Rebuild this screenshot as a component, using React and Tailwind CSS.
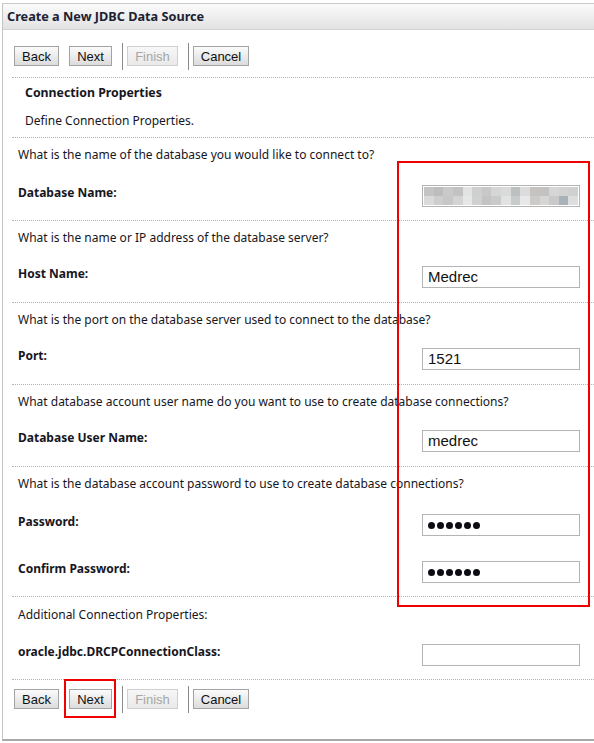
const blurCells = [
  ["bg-[#c4c4c4]", "bg-[#bdbdbd]", "bg-[#c9c9c9]", "bg-[#c2c2c2]", "bg-[#e2e4e4]", "bg-[#cfcfcf]", "bg-[#c8c8c8]", "bg-[#d6d6d6]", "bg-[#d9dada]", "bg-[#bcc0c0]", "bg-[#dcdcdc]", "bg-[#c6c2c0]", "bg-[#c2c2c2]", "bg-[#d6d6d6]", "bg-[#d2d2d2]", "bg-[#cfd0d0]"],
  ["bg-[#dadada]", "bg-[#cdcdcd]", "bg-[#c7c7c7]", "bg-[#d4d4d4]", "bg-[#e6e7e7]", "bg-[#d0d0d0]", "bg-[#c4c4c4]", "bg-[#cacaca]", "bg-[#e1e2e2]", "bg-[#c7cbcb]", "bg-[#e8e8e8]", "bg-[#cdcbc9]", "bg-[#d8d6d2]", "bg-[#c9c9c9]", "bg-[#a9b2b8]", "bg-[#dedede]"],
];

function ToolButton({ label, disabled, width }) {
  return (
    <div
      className={
        "h-[20px] flex items-center justify-center border font-['Liberation_Sans',Arial,sans-serif] text-[13px] leading-none " +
        (disabled
          ? "border-[#cfcfcf] bg-gradient-to-b from-[#f7f7f7] to-[#e9e9e9] text-[#a6a6a6]"
          : "border-[#a3a3a3] bg-gradient-to-b from-[#fbfbfb] to-[#dcdcdc] text-[#111]") +
        " " + width
      }
    >
      {label}
    </div>
  );
}

function Toolbar() {
  return (
    <div className="flex items-center h-[28px] pl-[2px]">
      <ToolButton label="Back" width="w-[45px]" />
      <div className="ml-[10px]">
        <ToolButton label="Next" width="w-[43px]" />
      </div>
      <div className="ml-[10px] mr-[4px] w-px h-[27px] bg-[#8a8a8a]" />
      <ToolButton label="Finish" disabled width="w-[51px]" />
      <div className="ml-[10px] mr-[4px] w-px h-[27px] bg-[#8a8a8a]" />
      <ToolButton label="Cancel" width="w-[56px]" />
    </div>
  );
}

function TextBox({ children, className = "" }) {
  return (
    <div className={"w-[158px] h-[22px] mb-[1px] self-end border border-[#b4b4b4] bg-white flex items-center pl-[5px] font-['Liberation_Sans',Arial,sans-serif] text-[15px] text-[#111] " + className}>
      {children}
    </div>
  );
}

function Dots() {
  return (
    <div className="flex gap-[2px]">
      {[0, 1, 2, 3, 4, 5].map(i => (
        <span key={i} className="w-[7px] h-[7px] rounded-full bg-[#0c0c14]" />
      ))}
    </div>
  );
}

function FieldRow({ label, children, className = "" }) {
  return (
    <div className={"flex h-[24px] " + className}>
      <div className="w-[404px] pt-[1px] leading-[16px] font-bold">{label}</div>
      {children}
    </div>
  );
}

function Section({ question, children, className = "" }) {
  return (
    <div className={"border-t border-dotted border-[#b2b2b2] pl-[6px] " + className}>
      <div className="leading-[18px]">{question}</div>
      {children}
    </div>
  );
}

export default function App() {
  return (
    <div className="relative w-[594px] h-[743px] bg-white overflow-hidden pt-[3px] pl-[2px] font-['Noto_Sans',Tahoma,sans-serif] text-[12px] text-[#161622]">
      <div className="w-[620px] h-[738px] border-t border-l border-b-2 border-t-[#c9c9c9] border-l-[#c3c3c3] border-b-[#a8a8a8]">
        <div className="h-[26px] border-b border-[#d4d4d4] bg-gradient-to-b from-[#fbfbfb] to-[#e2e2e2] flex items-center pl-[4px] pt-[1px] font-bold text-[12.7px] text-[#1c2233]">
          Create a New JDBC Data Source
        </div>

        <div className="pl-[9px]">
          <div className="pt-[12px]">
            <Toolbar />
          </div>

          <div className="mt-[7px] border-t border-dotted border-[#b2b2b2] pl-[13px] pt-[7px] pb-[8px]">
            <div className="leading-[16px] font-bold text-[12.3px]">Connection Properties</div>
            <div className="leading-[16px] mt-[12px]">Define Connection Properties.</div>
          </div>

          <Section question="What is the name of the database you would like to connect to?" className="pt-[8px] pb-[12px]">
            <FieldRow label="Database Name:" className="mt-[20px]">
              <div className="w-[158px] h-[22px] mb-[1px] self-end border border-[#b4b4b4] p-[1px] flex flex-col">
                {blurCells.map((row, r) => (
                  <div key={r} className="flex flex-1">
                    {row.map((c, i) => (
                      <div key={i} className={"flex-1 " + c} />
                    ))}
                  </div>
                ))}
              </div>
            </FieldRow>
          </Section>

          <Section question="What is the name or IP address of the database server?" className="pt-[8px] pb-[13px]">
            <FieldRow label="Host Name:" className="mt-[18px]">
              <TextBox>Medrec</TextBox>
            </FieldRow>
          </Section>

          <Section question="What is the port on the database server used to connect to the database?" className="pt-[8px] pb-[13px]">
            <FieldRow label="Port:" className="mt-[18px]">
              <TextBox>1521</TextBox>
            </FieldRow>
          </Section>

          <Section question="What database account user name do you want to use to create database connections?" className="pt-[8px] pb-[13px]">
            <FieldRow label="Database User Name:" className="mt-[18px]">
              <TextBox>medrec</TextBox>
            </FieldRow>
          </Section>

          <Section question="What is the database account password to use to create database connections?" className="pt-[8px] pb-[12px]">
            <FieldRow label="Password:" className="mt-[20px]">
              <TextBox><Dots /></TextBox>
            </FieldRow>
            <FieldRow label="Confirm Password:" className="mt-[23px]">
              <TextBox><Dots /></TextBox>
            </FieldRow>
          </Section>

          <Section question="Additional Connection Properties:" className="pt-[9px] pb-[12px]">
            <FieldRow label="oracle.jdbc.DRCPConnectionClass:" className="mt-[19px]">
              <TextBox />
            </FieldRow>
          </Section>

          <div className="border-t border-dotted border-[#b2b2b2] pt-[5px]">
            <Toolbar />
          </div>
        </div>
      </div>

      <div className="absolute left-[397px] top-[161px] w-[193px] h-[446px] border-2 border-[#f00000]" />
      <div className="absolute left-[64px] top-[679px] w-[52px] h-[39px] border-2 border-[#f00000]" />
    </div>
  );
}
